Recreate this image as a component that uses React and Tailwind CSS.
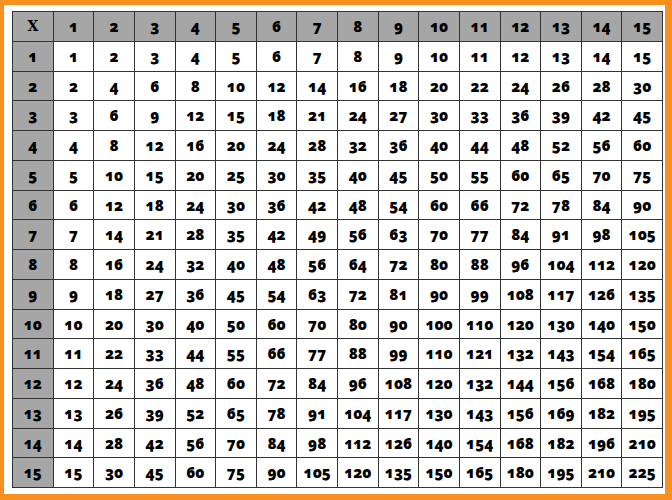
import React from "react";

const SIZE = 15;

const Cell = ({ value, head, serif }) => (
  <div
    className={`flex items-center justify-center ${
      head ? "bg-[#a6a6a6]" : "bg-white"
    } ${
      serif ? "font-['DejaVu_Serif',serif] font-bold text-[14px]" : "text-[15px] font-black"
    } text-black [font-variant-numeric:oldstyle-nums]`}
  >
    {value}
  </div>
);

const App = () => {
  const nums = Array.from({ length: SIZE }, (_, i) => i + 1);

  return (
    <div
      className="w-[672px] h-[500px] bg-white border-[#f7901e] border-l-[4px] border-t-[5px] border-r-[7px] border-b-[6px] pl-[8px] pt-[6px]"
      style={{ fontFamily: '"Noto Sans", "DejaVu Sans", sans-serif' }}
    >
      <div className="grid grid-cols-16 grid-rows-16 gap-px w-[651px] h-[477px] bg-[#333333] border border-[#333333]">
        <Cell value="X" head serif />
        {nums.map((n) => (
          <Cell key={`h${n}`} value={n} head />
        ))}
        {nums.map((r) => (
          <React.Fragment key={r}>
            <Cell value={r} head />
            {nums.map((c) => (
              <Cell key={c} value={r * c} />
            ))}
          </React.Fragment>
        ))}
      </div>
    </div>
  );
};

export default App;
